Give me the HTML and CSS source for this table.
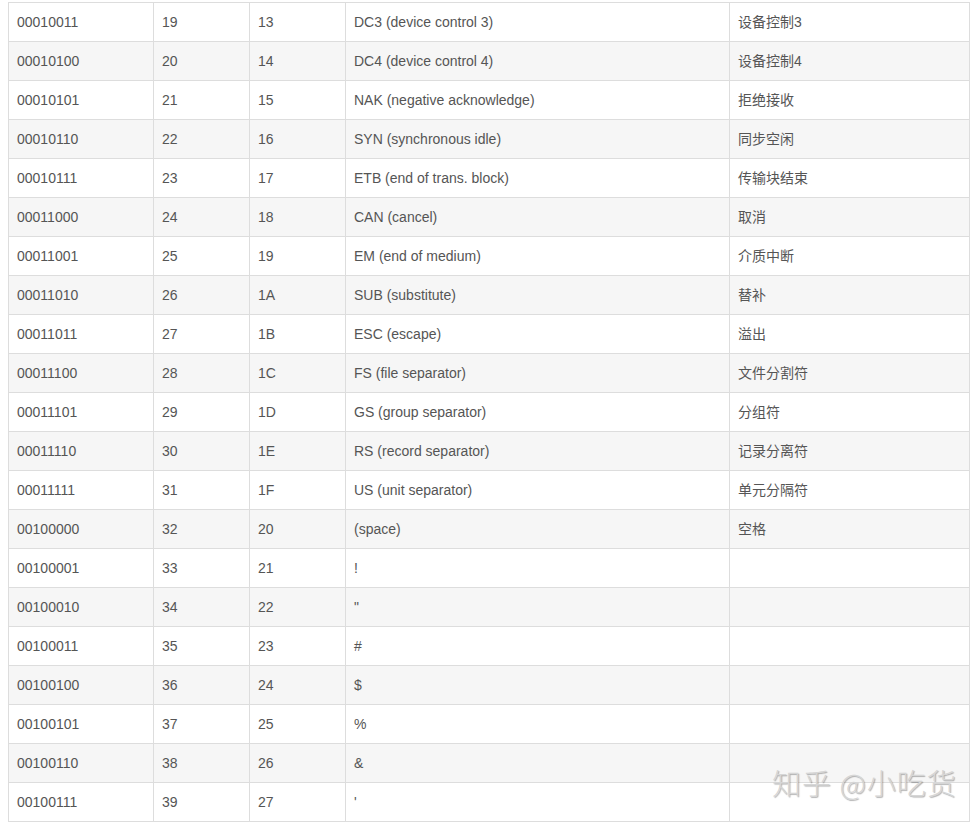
FILE: index.html
```html
<!DOCTYPE html>
<html lang="zh">
<head>
<meta charset="utf-8">
<link rel="stylesheet" href="styles.css">
</head>
<body>
<div class="wrap">
<table class="ascii">
<colgroup><col class="c1"><col class="c2"><col class="c3"><col class="c4"><col class="c5"></colgroup>
<tbody>
<tr><td>00010011</td><td>19</td><td>13</td><td>DC3 (device control 3)</td><td>设备控制3</td></tr>
<tr><td>00010100</td><td>20</td><td>14</td><td>DC4 (device control 4)</td><td>设备控制4</td></tr>
<tr><td>00010101</td><td>21</td><td>15</td><td>NAK (negative acknowledge)</td><td>拒绝接收</td></tr>
<tr><td>00010110</td><td>22</td><td>16</td><td>SYN (synchronous idle)</td><td>同步空闲</td></tr>
<tr><td>00010111</td><td>23</td><td>17</td><td>ETB (end of trans. block)</td><td>传输块结束</td></tr>
<tr><td>00011000</td><td>24</td><td>18</td><td>CAN (cancel)</td><td>取消</td></tr>
<tr><td>00011001</td><td>25</td><td>19</td><td>EM (end of medium)</td><td>介质中断</td></tr>
<tr><td>00011010</td><td>26</td><td>1A</td><td>SUB (substitute)</td><td>替补</td></tr>
<tr><td>00011011</td><td>27</td><td>1B</td><td>ESC (escape)</td><td>溢出</td></tr>
<tr><td>00011100</td><td>28</td><td>1C</td><td>FS (file separator)</td><td>文件分割符</td></tr>
<tr><td>00011101</td><td>29</td><td>1D</td><td>GS (group separator)</td><td>分组符</td></tr>
<tr><td>00011110</td><td>30</td><td>1E</td><td>RS (record separator)</td><td>记录分离符</td></tr>
<tr><td>00011111</td><td>31</td><td>1F</td><td>US (unit separator)</td><td>单元分隔符</td></tr>
<tr><td>00100000</td><td>32</td><td>20</td><td>(space)</td><td>空格</td></tr>
<tr><td>00100001</td><td>33</td><td>21</td><td>!</td><td></td></tr>
<tr><td>00100010</td><td>34</td><td>22</td><td>"</td><td></td></tr>
<tr><td>00100011</td><td>35</td><td>23</td><td>#</td><td></td></tr>
<tr><td>00100100</td><td>36</td><td>24</td><td>$</td><td></td></tr>
<tr><td>00100101</td><td>37</td><td>25</td><td>%</td><td></td></tr>
<tr><td>00100110</td><td>38</td><td>26</td><td>&amp;</td><td></td></tr>
<tr><td>00100111</td><td>39</td><td>27</td><td>'</td><td></td></tr>
</tbody>
</table>
<div class="watermark">知乎 @小吃货</div>
</div>
</body>
</html>
```
FILE: styles.css
```css
html, body {
  margin: 0;
  padding: 0;
  background: #fff;
  overflow: hidden;
}
body {
  padding: 2px 10px 0 8px;
  font-family: "Liberation Sans", Arial, "Noto Sans CJK SC", sans-serif;
  font-size: 14px;
  color: #555;
}
.wrap {
  position: relative;
}
.ascii {
  width: 961px;
  border-collapse: collapse;
  table-layout: fixed;
}
.c1 { width: 145px; }
.c2 { width: 96px; }
.c3 { width: 96px; }
.c4 { width: 384px; }
.c5 { width: 240px; }
.ascii td {
  border: 1px solid #ddd;
  height: 39px;
  padding: 0 8px;
  box-sizing: border-box;
  line-height: 20px;
  vertical-align: middle;
  font-family: "Liberation Sans", Arial, "Noto Sans CJK SC", sans-serif;
}
.ascii tr:nth-child(even) td {
  background: #f6f6f6;
}
.watermark {
  position: absolute;
  left: 764px;
  top: 759px;
  font-family: "Noto Sans CJK SC", sans-serif;
  font-size: 29px;
  font-weight: 300;
  color: #d6d6d6;
  text-shadow: 1px 1px 1px rgba(0,0,0,0.3);
  letter-spacing: 1px;
  white-space: nowrap;
}
```
